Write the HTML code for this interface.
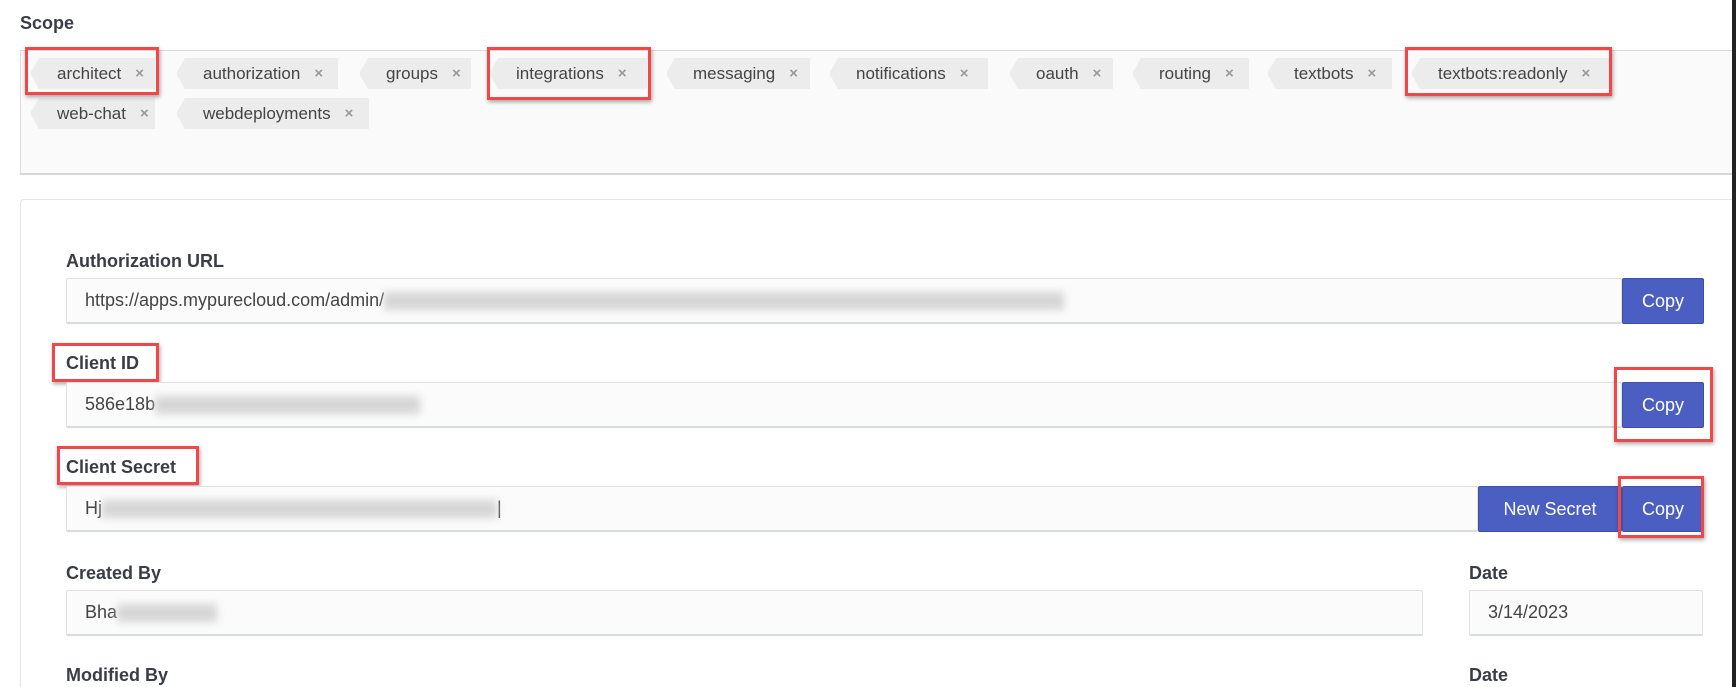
<!DOCTYPE html>
<html style="overflow:hidden;height:687px"><head><meta charset="utf-8"><style>
body{margin:0;width:1736px;height:687px;background:#fff;position:relative;overflow:hidden;font-family:"Liberation Sans",Arial,sans-serif;color:#333}
.a{position:absolute}
.lbl{position:absolute;font-weight:bold;font-size:18px;color:#3a3d45}
.box{position:absolute;background:#fbfbfb;border:1px solid #dfe1e5;border-bottom:2px solid #d8dbe0;box-sizing:border-box;border-radius:2px;font-size:18px;color:#444;padding-left:18px;display:flex;align-items:center}
.btn{position:absolute;background:#4a5fc1;color:#fff;font-size:18px;display:flex;align-items:center;justify-content:center;box-sizing:border-box;border:1px solid #3c50a8;border-radius:2px}
.tag{position:absolute;height:31px;background:#ececec;box-shadow:0 2px 1px #d0d0d0;font-size:17px;color:#444;display:flex;align-items:center;padding-left:26px;box-sizing:border-box;clip-path:polygon(8px 0,100% 0,100% 100%,8px 100%,0 55%,0 45%)}
.tag b{color:#999;font-size:15px;margin-left:14px}
.red{position:absolute;border:3px solid #f04848;box-shadow:1px 2px 4px rgba(0,0,0,.35);box-sizing:border-box}
.blur{display:inline-block;height:18px;background:#d6d6d6;filter:blur(4px);vertical-align:middle}
</style></head><body>
<div class="lbl" style="left:20px;top:13px">Scope</div>
<div class="a" style="left:20px;top:50px;width:1716px;height:125px;background:#fafafa;border:1px solid #dcdcdc;border-bottom:2px solid #d6d6d6;box-sizing:border-box"></div>
<div class="tag" style="left:31px;top:58px;width:124px">architect<b>×</b></div>
<div class="tag" style="left:177px;top:58px;width:161px">authorization<b>×</b></div>
<div class="tag" style="left:360px;top:58px;width:111px">groups<b>×</b></div>
<div class="tag" style="left:490px;top:58px;width:157px">integrations<b>×</b></div>
<div class="tag" style="left:667px;top:58px;width:143px">messaging<b>×</b></div>
<div class="tag" style="left:830px;top:58px;width:158px">notifications<b>×</b></div>
<div class="tag" style="left:1010px;top:58px;width:103px">oauth<b>×</b></div>
<div class="tag" style="left:1133px;top:58px;width:116px">routing<b>×</b></div>
<div class="tag" style="left:1268px;top:58px;width:124px">textbots<b>×</b></div>
<div class="tag" style="left:1412px;top:58px;width:197px">textbots:readonly<b>×</b></div>
<div class="tag" style="left:31px;top:98px;width:124px">web-chat<b>×</b></div>
<div class="tag" style="left:177px;top:98px;width:192px">webdeployments<b>×</b></div>
<div class="red" style="left:25px;top:47px;width:134px;height:48px"></div>
<div class="red" style="left:487px;top:47px;width:164px;height:53px"></div>
<div class="red" style="left:1405px;top:47px;width:207px;height:49px"></div>

<div class="a" style="left:20px;top:199px;width:1716px;height:488px;border:1px solid #e3e3e3;border-bottom:none;border-radius:4px 4px 0 0;background:#fff;box-sizing:border-box"></div>

<div class="lbl" style="left:66px;top:251px">Authorization URL</div>
<div class="box" style="left:66px;top:278px;width:1556px;height:46px">https://apps.mypurecloud.com/admin/<span class="blur" style="width:680px"></span></div>
<div class="btn" style="left:1622px;top:278px;width:82px;height:46px">Copy</div>

<div class="lbl" style="left:66px;top:353px">Client ID</div>
<div class="red" style="left:52px;top:343px;width:107px;height:39px"></div>
<div class="box" style="left:66px;top:382px;width:1556px;height:46px">586e18b<span class="blur" style="width:265px"></span></div>
<div class="btn" style="left:1622px;top:382px;width:82px;height:46px">Copy</div>
<div class="red" style="left:1614px;top:367px;width:99px;height:75px"></div>

<div class="lbl" style="left:66px;top:457px">Client Secret</div>
<div class="red" style="left:57px;top:446px;width:142px;height:39px"></div>
<div class="box" style="left:66px;top:486px;width:1412px;height:46px">Hj<span class="blur" style="width:395px"></span>|</div>
<div class="btn" style="left:1478px;top:486px;width:144px;height:46px">New Secret</div>
<div class="btn" style="left:1622px;top:486px;width:82px;height:46px">Copy</div>
<div class="red" style="left:1618px;top:476px;width:86px;height:62px"></div>

<div class="lbl" style="left:66px;top:563px">Created By</div>
<div class="box" style="left:66px;top:590px;width:1357px;height:46px">Bha<span class="blur" style="width:100px"></span></div>
<div class="lbl" style="left:1469px;top:563px">Date</div>
<div class="box" style="left:1469px;top:590px;width:234px;height:46px">3/14/2023</div>

<div class="lbl" style="left:66px;top:665px">Modified By</div>
<div class="lbl" style="left:1469px;top:665px">Date</div>
<div class="a" style="left:1732px;top:0;width:4px;height:687px;background:#222"></div>
</body></html>
